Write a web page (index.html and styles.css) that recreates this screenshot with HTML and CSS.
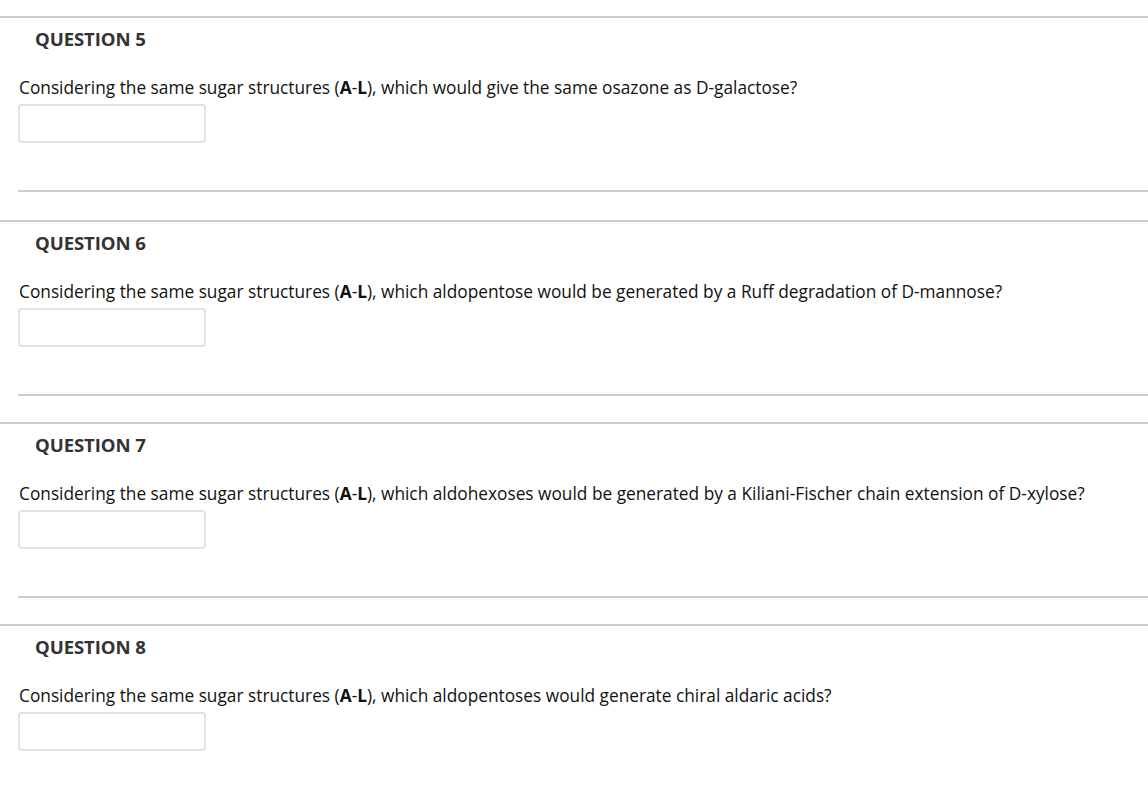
FILE: index.html
```html
<!DOCTYPE html>
<html>
<head>
<meta charset="utf-8">
<link rel="stylesheet" href="styles.css">
</head>
<body>
<div class="page">
  <div class="question">
    <h3 class="q-title">QUESTION 5</h3>
    <div class="q-body">
      <p class="q-text">Considering the same sugar structures (<b>A</b>-<b>L</b>), which would give the same osazone as D-galactose?</p>
      <div class="answer"></div>
      <div class="q-sep"></div>
    </div>
  </div>
  <div class="question">
    <h3 class="q-title">QUESTION 6</h3>
    <div class="q-body">
      <p class="q-text">Considering the same sugar structures (<b>A</b>-<b>L</b>), which aldopentose would be generated by a Ruff degradation of D-mannose?</p>
      <div class="answer"></div>
      <div class="q-sep"></div>
    </div>
  </div>
  <div class="question">
    <h3 class="q-title">QUESTION 7</h3>
    <div class="q-body">
      <p class="q-text">Considering the same sugar structures (<b>A</b>-<b>L</b>), which aldohexoses would be generated by a Kiliani-Fischer chain extension of D-xylose?</p>
      <div class="answer"></div>
      <div class="q-sep"></div>
    </div>
  </div>
  <div class="question">
    <h3 class="q-title">QUESTION 8</h3>
    <div class="q-body">
      <p class="q-text">Considering the same sugar structures (<b>A</b>-<b>L</b>), which aldopentoses would generate chiral aldaric acids?</p>
      <div class="answer"></div>
    </div>
  </div>
</div>
</body>
</html>
```
FILE: styles.css
```css
html, body {
  margin: 0;
  padding: 0;
  background: #fff;
}
body {
  font-family: "Open Sans", "Liberation Sans", sans-serif;
  color: #111;
}
.page {
  padding-top: 16px;
}
.question {
  border-top: 2px solid #cdcdcd;
}
.q-title {
  margin: 0;
  padding: 9px 0 0 35px;
  font-size: 18.6px;
  line-height: 24px;
  font-weight: 700;
  color: #333;
  letter-spacing: -0.1px;
}
.q-body {
  padding-left: 18px;
}
.q-text {
  margin: 25px 0 0 1px;
  font-size: 17.3px;
  line-height: 24px;
}
.q-text b {
  font-weight: 700;
}
.answer {
  margin-top: 4px;
  width: 188px;
  height: 39px;
  box-sizing: border-box;
  border: 2px solid #e2e2e2;
  border-radius: 4px;
  background: #fff;
}
.q-sep {
  margin-top: 47px;
  margin-bottom: 26px;
  border-top: 2px solid #cdcdcd;
}
.question:first-child .q-sep {
  margin-bottom: 28px;
}
```
